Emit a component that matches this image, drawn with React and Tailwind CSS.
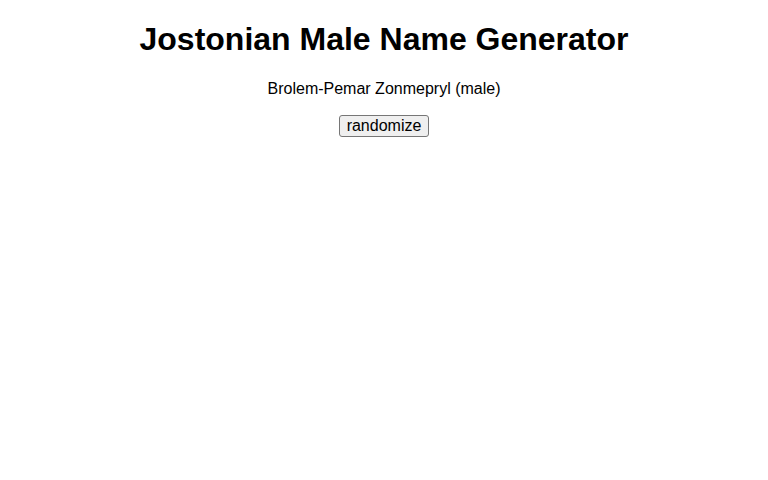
import { useState } from "react";

const firstParts = ["Brolem", "Tavrin", "Oskel", "Merdan", "Juvost", "Kelbar"];
const secondParts = ["Pemar", "Dorun", "Valek", "Sirom", "Taleth", "Grumov"];
const surnames = ["Zonmepryl", "Harvostin", "Belqurat", "Murenkol", "Drosvelik", "Ostranyl"];

const pick = (list) => list[Math.floor(Math.random() * list.length)];

export default function App() {
  const [name, setName] = useState("Brolem-Pemar Zonmepryl");

  const randomize = () => {
    setName(`${pick(firstParts)}-${pick(secondParts)} ${pick(surnames)}`);
  };

  return (
    <div className="min-h-screen bg-white text-black text-center font-['Liberation_Sans',Arial,sans-serif] pt-[21.44px]">
      <h1 className="text-[32px] font-bold leading-[normal] mb-[21.44px]">Jostonian Male Name Generator</h1>
      <p className="text-base leading-[normal] mb-4">{name} (male)</p>
      <p>
        <button
          onClick={randomize}
          className="text-base leading-[normal] px-[7px] py-px bg-[#efefef] border border-[#767676] rounded-[3px] hover:bg-[#e5e5e5]"
        >
          randomize
        </button>
      </p>
    </div>
  );
}
